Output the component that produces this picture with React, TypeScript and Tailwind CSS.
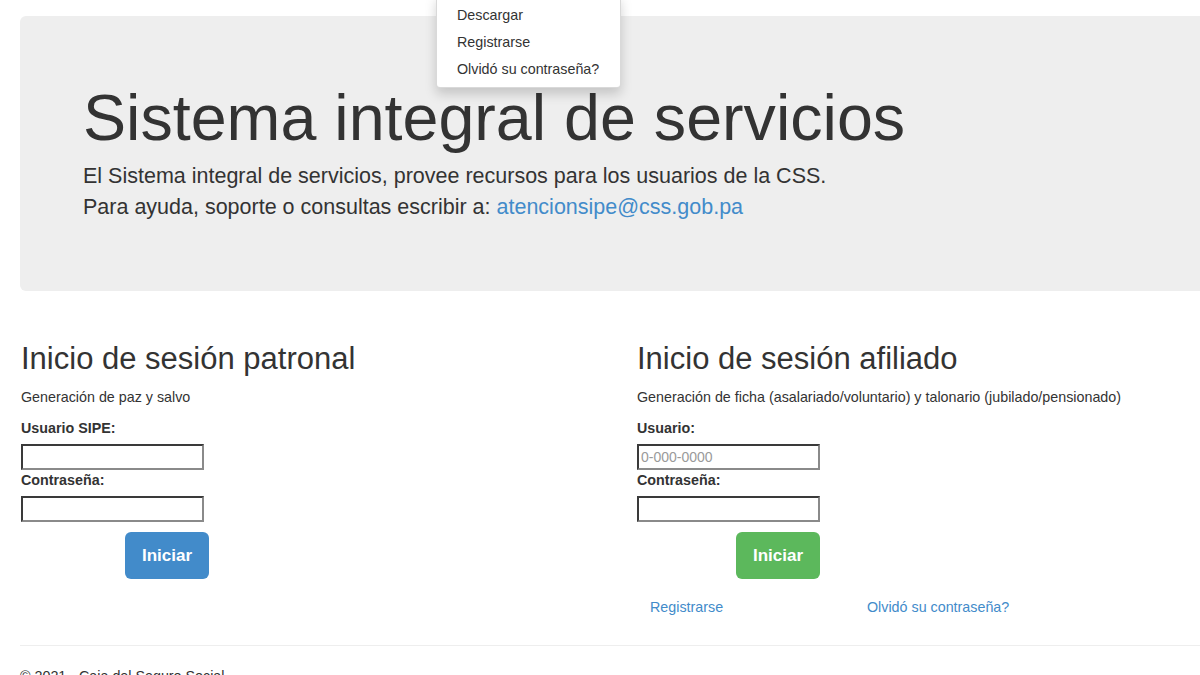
import React from "react";

function Field({ label, placeholder }: { label: string; placeholder?: string }) {
  return (
    <>
      <div className="text-[14.3px] leading-[20px] font-bold text-[#333]">{label}</div>
      <input
        className="mt-[6px] block h-[26px] w-[183px] border-2 border-t-[#3a3a3a] border-l-[#3a3a3a] border-b-[#8a8a8a] border-r-[#8a8a8a] bg-white px-[2px] text-[14px] text-[#333] outline-none placeholder:text-[#9a9a9a]"
        placeholder={placeholder}
      />
    </>
  );
}

export default function App() {
  return (
    <div className="relative h-[675px] w-[1200px] overflow-hidden bg-white font-['Liberation_Sans',Arial,sans-serif] text-[#333]">
      {/* dropdown menu */}
      <div className="absolute left-[436px] top-[-5px] z-10 w-[185px] rounded-b-[4px] border border-[rgba(0,0,0,0.15)] bg-white pb-[5px] pt-[5px] shadow-[0_6px_12px_rgba(0,0,0,0.175)]">
        {["Descargar", "Registrarse", "Olvidó su contraseña?"].map((t) => (
          <div key={t} className="px-[20px] py-[3.5px] text-[14.3px] leading-[20px] text-[#333]">
            {t}
          </div>
        ))}
      </div>

      <div className="pl-[20px] pt-[16px]">
        {/* jumbotron */}
        <div className="w-[1240px] rounded-[6px] bg-[#eeeeee] pb-[68px] pl-[63px] pt-[67px]">
          <h1 className="text-[64.6px] leading-[70px] text-[#333]">Sistema integral de servicios</h1>
          <p className="mt-[8px] text-[21.5px] leading-[31px] text-[#333]">
            El Sistema integral de servicios, provee recursos para los usuarios de la CSS.
            <br />
            Para ayuda, soporte o consultas escribir a:{" "}
            <a className="text-[#428bca]">atencionsipe@css.gob.pa</a>
          </p>
        </div>

        {/* login columns */}
        <div className="mt-[51px] grid grid-cols-[616px_616px] items-start pl-[1px]">
          <div>
            <h2 className="text-[31px] leading-[34px] text-[#333]">Inicio de sesión patronal</h2>
            <p className="mt-[11px] text-[14.3px] leading-[20px] text-[#333]">Generación de paz y salvo</p>
            <div className="mt-[11px]">
              <Field label="Usuario SIPE:" />
              <Field label="Contraseña:" />
            </div>
            <button className="ml-[104px] mt-[10px] h-[47px] w-[84px] rounded-[6px] bg-[#428bca] text-[17px] font-bold text-white">
              Iniciar
            </button>
          </div>
          <div>
            <h2 className="text-[31px] leading-[34px] text-[#333]">Inicio de sesión afiliado</h2>
            <p className="mt-[11px] text-[14.3px] leading-[20px] text-[#333]">
              Generación de ficha (asalariado/voluntario) y talonario (jubilado/pensionado)
            </p>
            <div className="mt-[11px]">
              <Field label="Usuario:" placeholder="0-000-0000" />
              <Field label="Contraseña:" />
            </div>
            <button className="ml-[99px] mt-[10px] h-[47px] w-[84px] rounded-[6px] bg-[#5cb85c] text-[17px] font-bold text-white">
              Iniciar
            </button>
            <div className="mt-[18px] flex text-[14.3px] leading-[20px] text-[#428bca]">
              <a className="ml-[13px] w-[217px]">Registrarse</a>
              <a>Olvidó su contraseña?</a>
            </div>
          </div>
        </div>

        {/* footer */}
        <hr className="mt-[28px] w-[1240px] border-0 border-t border-[#eeeeee]" />
        <footer className="mt-[20px] text-[14.3px] leading-[20px] text-[#333]">© 2021 - Caja del Seguro Social</footer>
      </div>
    </div>
  );
}
